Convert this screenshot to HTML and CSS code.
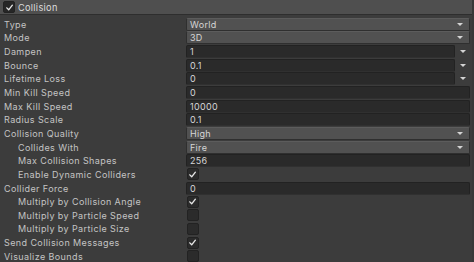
FILE: index.html
```html
<!DOCTYPE html>
<html>
<head>
<meta charset="utf-8">
<link rel="stylesheet" href="styles.css">
</head>
<body>
<div class="panel">
  <div class="header">
    <span class="check head-check"><svg viewBox="0 0 10 10"><path d="M2 5.4 L4.1 7.6 L8.2 2.4" fill="none" stroke="#e6e6e6" stroke-width="1.5" stroke-linecap="round" stroke-linejoin="round"/></svg></span>
    <span class="title">Collision</span>
  </div>
  <div class="rows">
    <div class="row"><span class="label">Type</span><div class="field dropdown"><span>World</span><i class="arrow"></i></div></div>
    <div class="row"><span class="label">Mode</span><div class="field dropdown"><span>3D</span><i class="arrow"></i></div></div>
    <div class="row"><span class="label">Dampen</span><div class="curve"><div class="field num"><span>1</span></div><i class="arrow"></i></div></div>
    <div class="row"><span class="label">Bounce</span><div class="curve"><div class="field num"><span>0.1</span></div><i class="arrow"></i></div></div>
    <div class="row"><span class="label">Lifetime Loss</span><div class="curve"><div class="field num"><span>0</span></div><i class="arrow"></i></div></div>
    <div class="row"><span class="label">Min Kill Speed</span><div class="field num"><span>0</span></div></div>
    <div class="row"><span class="label">Max Kill Speed</span><div class="field num"><span>10000</span></div></div>
    <div class="row"><span class="label">Radius Scale</span><div class="field num"><span>0.1</span></div></div>
    <div class="row"><span class="label">Collision Quality</span><div class="field dropdown"><span>High</span><i class="arrow"></i></div></div>
    <div class="row"><span class="label sub">Collides With</span><div class="field dropdown"><span>Fire</span><i class="arrow"></i></div></div>
    <div class="row"><span class="label sub">Max Collision Shapes</span><div class="field num"><span>256</span></div></div>
    <div class="row"><span class="label sub">Enable Dynamic Colliders</span><div class="cell"><span class="check on"><svg viewBox="0 0 10 10"><path d="M2 5.4 L4.1 7.6 L8.2 2.4" fill="none" stroke="#e6e6e6" stroke-width="1.5" stroke-linecap="round" stroke-linejoin="round"/></svg></span></div></div>
    <div class="row"><span class="label">Collider Force</span><div class="field num"><span>0</span></div></div>
    <div class="row"><span class="label sub">Multiply by Collision Angle</span><div class="cell"><span class="check on"><svg viewBox="0 0 10 10"><path d="M2 5.4 L4.1 7.6 L8.2 2.4" fill="none" stroke="#e6e6e6" stroke-width="1.5" stroke-linecap="round" stroke-linejoin="round"/></svg></span></div></div>
    <div class="row"><span class="label sub">Multiply by Particle Speed</span><div class="cell"><span class="check"></span></div></div>
    <div class="row"><span class="label sub">Multiply by Particle Size</span><div class="cell"><span class="check"></span></div></div>
    <div class="row"><span class="label">Send Collision Messages</span><div class="cell"><span class="check on"><svg viewBox="0 0 10 10"><path d="M2 5.4 L4.1 7.6 L8.2 2.4" fill="none" stroke="#e6e6e6" stroke-width="1.5" stroke-linecap="round" stroke-linejoin="round"/></svg></span></div></div>
    <div class="row"><span class="label">Visualize Bounds</span><div class="cell"><span class="check"></span></div></div>
  </div>
</div>
</body>
</html>
```
FILE: styles.css
```css
html, body {
  margin: 0;
  padding: 0;
  background: #383838;
  overflow: hidden;
}
body {
  font-family: Inter, "Noto Sans", sans-serif;
  font-size: 9px;
  color: #c4c4c4;
}
.panel {
  width: 472px;
  height: 262px;
  background: #3c3c3c;
}
.header {
  height: 14px;
  background: #4f4f4f;
  border-bottom: 1px solid #2e2e2e;
  display: flex;
  align-items: center;
  padding-left: 3px;
  gap: 3px;
}
.title {
  color: #dcdcdc;
  font-size: 9.2px;
  letter-spacing: 0.3px;
}
.rows {
  padding: 2.5px 2px 0 4px;
}
.row {
  height: 13.65px;
  display: flex;
  align-items: center;
}
.label {
  width: 182px;
  flex: none;
  white-space: nowrap;
  letter-spacing: 0.4px;
}
.label.sub {
  padding-left: 14px;
  width: 168px;
}
.field {
  height: 11px;
  border-radius: 2px;
  display: flex;
  align-items: center;
  padding-left: 3px;
  color: #d6d6d6;
  box-sizing: content-box;
  letter-spacing: 0.3px;
}
.dropdown {
  flex: 1;
  background: #515151;
  border: 0.5px solid #2f2f2f;
  border-top-color: #5c5c5c;
  justify-content: space-between;
  padding-right: 6px;
}
.num {
  flex: 1;
  background: #2a2a2a;
  border: 0.5px solid #222;
  border-bottom-color: #303030;
}
.curve {
  flex: 1;
  display: flex;
  align-items: center;
}
.curve .arrow {
  width: 0;
  margin: 0 4px 0 5px;
}
.arrow {
  display: block;
  width: 0;
  height: 0;
  border-left: 3px solid transparent;
  border-right: 3px solid transparent;
  border-top: 3.5px solid #d4d4d4;
}
.cell {
  flex: 1;
  display: flex;
  align-items: center;
}
.check {
  width: 10px;
  height: 10px;
  border-radius: 2px;
  background: #2b2b2b;
  border: 0.5px solid #222;
  display: flex;
  align-items: center;
  justify-content: center;
  margin-left: 0.5px;
}
.check svg {
  width: 9px;
  height: 9px;
}
.head-check {
  width: 10px;
  height: 10px;
  background: #262626;
  margin-left: 0;
}
```
